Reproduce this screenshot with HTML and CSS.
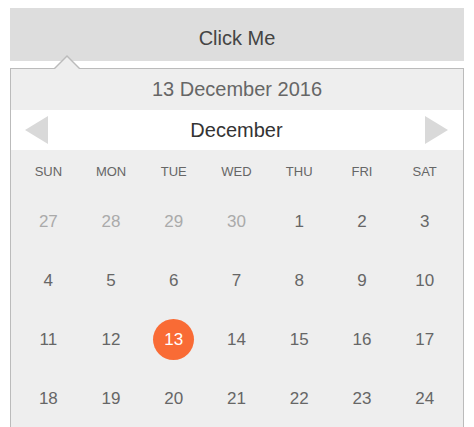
FILE: index.html
```html
<!DOCTYPE html>
<html lang="en">
<head>
  <meta charset="UTF-8" />
  <title>Date Picker</title>
  <link rel="stylesheet" href="styles.css">
</head>
<body>

  <button class="trigger">Click Me</button>

  <div class="picker">
    <div class="selected-date">13 December 2016</div>
    <div class="month-bar">
      <span class="nav prev"></span>
      <span class="month-name">December</span>
      <span class="nav next"></span>
    </div>
    <div class="weekdays">
      <span>SUN</span><span>MON</span><span>TUE</span><span>WED</span><span>THU</span><span>FRI</span><span>SAT</span>
    </div>
    <div class="days">
      <span class="other">27</span><span class="other">28</span><span class="other">29</span><span class="other">30</span>
      <span>1</span><span>2</span><span>3</span>
      <span>4</span><span>5</span><span>6</span><span>7</span><span>8</span><span>9</span><span>10</span>
      <span>11</span><span>12</span><span class="today">13</span><span>14</span><span>15</span><span>16</span><span>17</span>
      <span>18</span><span>19</span><span>20</span><span>21</span><span>22</span><span>23</span><span>24</span>
    </div>
  </div>

</body>
</html>
```
FILE: styles.css
```css
* {
  box-sizing: border-box;
  font-family: 'Liberation Sans', Arial, sans-serif;
}

body {
  margin: 0;
  padding: 8px 10px 0;
  background: white;
  color: #666;
  overflow: hidden;
}

.trigger {
  display: block;
  width: 454px;
  height: 53px;
  margin: 0;
  padding: 8px 0 0;
  background: #dddddd;
  border: none;
  color: #444;
  font-size: 20px;
  cursor: pointer;
}

.picker {
  position: relative;
  width: 454px;
  margin-top: 7px;
  background: #eeeeee;
  border: 1px solid #bbbbbb;
  border-bottom: none;
}

/* little pointer up to the button */
.picker::before,
.picker::after {
  content: "";
  position: absolute;
  left: 42px;
  top: -14px;
  border: 14px solid transparent;
  border-top: none;
  border-bottom-color: #bbbbbb;
}

.picker::after {
  left: 43px;
  top: -12px;
  border-width: 0 13px 13px;
  border-bottom-color: #eeeeee;
}

.selected-date {
  height: 41px;
  line-height: 41px;
  text-align: center;
  font-size: 20px;
  color: #666;
}

.month-bar {
  display: flex;
  align-items: center;
  justify-content: space-between;
  height: 40px;
  padding: 0 15px 0 14px;
  background: white;
}

.month-name {
  font-size: 20px;
  color: #333;
}

.nav {
  width: 0;
  height: 0;
  border-top: 14px solid transparent;
  border-bottom: 14px solid transparent;
  cursor: pointer;
}

.prev {
  border-right: 23px solid #d9d9d9;
}

.next {
  border-left: 23px solid #d9d9d9;
}

.weekdays,
.days {
  display: grid;
  grid-template-columns: repeat(7, 1fr);
  padding: 0 7px 0 6px;
  text-align: center;
}

.weekdays {
  height: 42px;
  align-items: center;
  font-size: 13px;
  color: #666;
}

.days {
  grid-auto-rows: 59px;
  align-items: center;
  justify-items: center;
  font-size: 17px;
  color: #666;
}

.days span {
  width: 41px;
  height: 41px;
  line-height: 41px;
  border-radius: 50%;
  cursor: pointer;
}

.days .other {
  color: #aaa;
}

.days .today {
  background: #f96b35;
  color: white;
}
```
